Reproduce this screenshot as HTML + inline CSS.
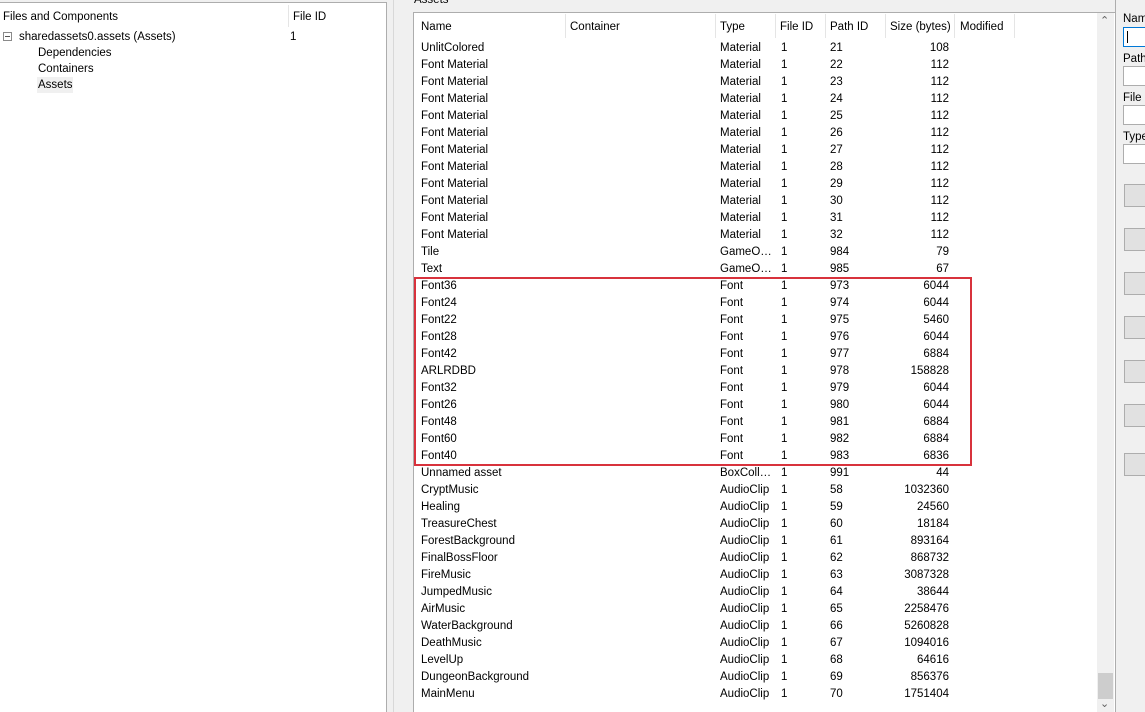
<!DOCTYPE html><html><head><style>
html,body{margin:0;width:1145px;height:712px;overflow:hidden}
body{background:#f0f0f0;font-family:"Liberation Sans",sans-serif;font-size:11.5px;color:#000;position:relative}
.a{position:absolute;white-space:nowrap}
.r{text-align:right}
</style></head><body>
<div class="a" style="left:0;top:2px;width:386px;height:710px;background:#fff;border-top:1px solid #adadad;border-right:1px solid #adadad"></div>
<div class="a" style="left:393px;top:0;width:1px;height:712px;background:#d8d8d8"></div>
<div class="a" style="left:288px;top:5px;width:1px;height:22px;background:#e5e5e5"></div>
<div class="a" style="left:3px;top:11px">Files and Components</div>
<div class="a" style="left:293px;top:11px">File ID</div>
<div class="a" style="left:3px;top:32px;width:7px;height:7px;border:1px solid #8a8a8a;background:#fff"></div>
<div class="a" style="left:5px;top:36px;width:5px;height:1px;background:#555"></div>
<div class="a" style="left:19px;top:31px">sharedassets0.assets (Assets)</div>
<div class="a" style="left:290px;top:31px">1</div>
<div class="a" style="left:38px;top:47px">Dependencies</div>
<div class="a" style="left:38px;top:63px">Containers</div>
<div class="a" style="left:37px;top:77px;width:36px;height:16px;background:#f0f0f0"></div>
<div class="a" style="left:38px;top:79px">Assets</div>
<div class="a" style="left:413px;top:12px;width:701px;height:710px;background:#fff;border:1px solid #adadad"></div>
<div class="a" style="left:1097px;top:13px;width:17px;height:700px;background:#f0f0f0"></div>
<div class="a" style="left:1098px;top:673px;width:15px;height:26px;background:#cdcdcd"></div>
<div class="a" style="left:1100px;top:14px;color:#606060;font-size:11px">&#8963;</div>
<div class="a" style="left:1100px;top:697px;color:#606060;font-size:11px">&#8964;</div>
<div class="a" style="left:414px;top:-6px;color:#000">Assets</div>
<div class="a" style="left:565px;top:14px;width:1px;height:24px;background:#e5e5e5"></div>
<div class="a" style="left:715px;top:14px;width:1px;height:24px;background:#e5e5e5"></div>
<div class="a" style="left:775px;top:14px;width:1px;height:24px;background:#e5e5e5"></div>
<div class="a" style="left:825px;top:14px;width:1px;height:24px;background:#e5e5e5"></div>
<div class="a" style="left:885px;top:14px;width:1px;height:24px;background:#e5e5e5"></div>
<div class="a" style="left:954px;top:14px;width:1px;height:24px;background:#e5e5e5"></div>
<div class="a" style="left:1014px;top:14px;width:1px;height:24px;background:#e5e5e5"></div>
<div class="a" style="left:421px;top:21px">Name</div>
<div class="a" style="left:570px;top:21px">Container</div>
<div class="a" style="left:720px;top:21px">Type</div>
<div class="a" style="left:780px;top:21px">File ID</div>
<div class="a" style="left:830px;top:21px">Path ID</div>
<div class="a" style="left:890px;top:21px">Size (bytes)</div>
<div class="a" style="left:960px;top:21px">Modified</div>
<div id="rows"></div>
<div class="a" style="left:414px;top:277px;width:554px;height:185px;border:2px solid #d8323c"></div>
<div class="a" style="left:1115px;top:0;width:1px;height:712px;background:#adadad"></div>
<div class="a" style="left:1123px;top:13px">Name</div>
<div class="a" style="left:1123px;top:27px;width:30px;height:18px;background:#fff;border:1px solid #0078d7"></div>
<div class="a" style="left:1127px;top:31px;width:1px;height:12px;background:#000"></div>
<div class="a" style="left:1123px;top:53px">Path</div>
<div class="a" style="left:1123px;top:66px;width:30px;height:18px;background:#fff;border:1px solid #adadad"></div>
<div class="a" style="left:1123px;top:92px">File ID</div>
<div class="a" style="left:1123px;top:105px;width:30px;height:18px;background:#fff;border:1px solid #adadad"></div>
<div class="a" style="left:1123px;top:131px">Type</div>
<div class="a" style="left:1123px;top:144px;width:30px;height:18px;background:#fff;border:1px solid #adadad"></div>
<div id="btns"></div>
<script>
var d=[["UnlitColored","Material",21,108]];
for(var i=22;i<=32;i++)d.push(["Font Material","Material",i,112]);
d=d.concat([["Tile","GameO…",984,79],["Text","GameO…",985,67],["Font36","Font",973,6044],["Font24","Font",974,6044],["Font22","Font",975,5460],["Font28","Font",976,6044],["Font42","Font",977,6884],["ARLRDBD","Font",978,158828],["Font32","Font",979,6044],["Font26","Font",980,6044],["Font48","Font",981,6884],["Font60","Font",982,6884],["Font40","Font",983,6836],["Unnamed asset","BoxColl…",991,44],["CryptMusic","AudioClip",58,1032360],["Healing","AudioClip",59,24560],["TreasureChest","AudioClip",60,18184],["ForestBackground","AudioClip",61,893164],["FinalBossFloor","AudioClip",62,868732],["FireMusic","AudioClip",63,3087328],["JumpedMusic","AudioClip",64,38644],["AirMusic","AudioClip",65,2258476],["WaterBackground","AudioClip",66,5260828],["DeathMusic","AudioClip",67,1094016],["LevelUp","AudioClip",68,64616],["DungeonBackground","AudioClip",69,856376],["MainMenu","AudioClip",70,1751404]]);
var h="";d.forEach(function(r,i){var t=42+i*17;
h+='<div class="a" style="left:421px;top:'+t+'px">'+r[0]+'</div><div class="a" style="left:720px;top:'+t+'px">'+r[1]+'</div><div class="a" style="left:781px;top:'+t+'px">1</div><div class="a" style="left:830px;top:'+t+'px">'+r[2]+'</div><div class="a r" style="left:880px;width:69px;top:'+t+'px">'+r[3]+'</div>';});
document.getElementById("rows").innerHTML=h;
var b="";[184,228,272,316,360,404,453].forEach(function(y){b+='<div class="a" style="left:1124px;top:'+y+'px;width:30px;height:21px;background:#e1e1e1;border:1px solid #adadad"></div>';});
document.getElementById("btns").innerHTML=b;
</script>
</body></html>
